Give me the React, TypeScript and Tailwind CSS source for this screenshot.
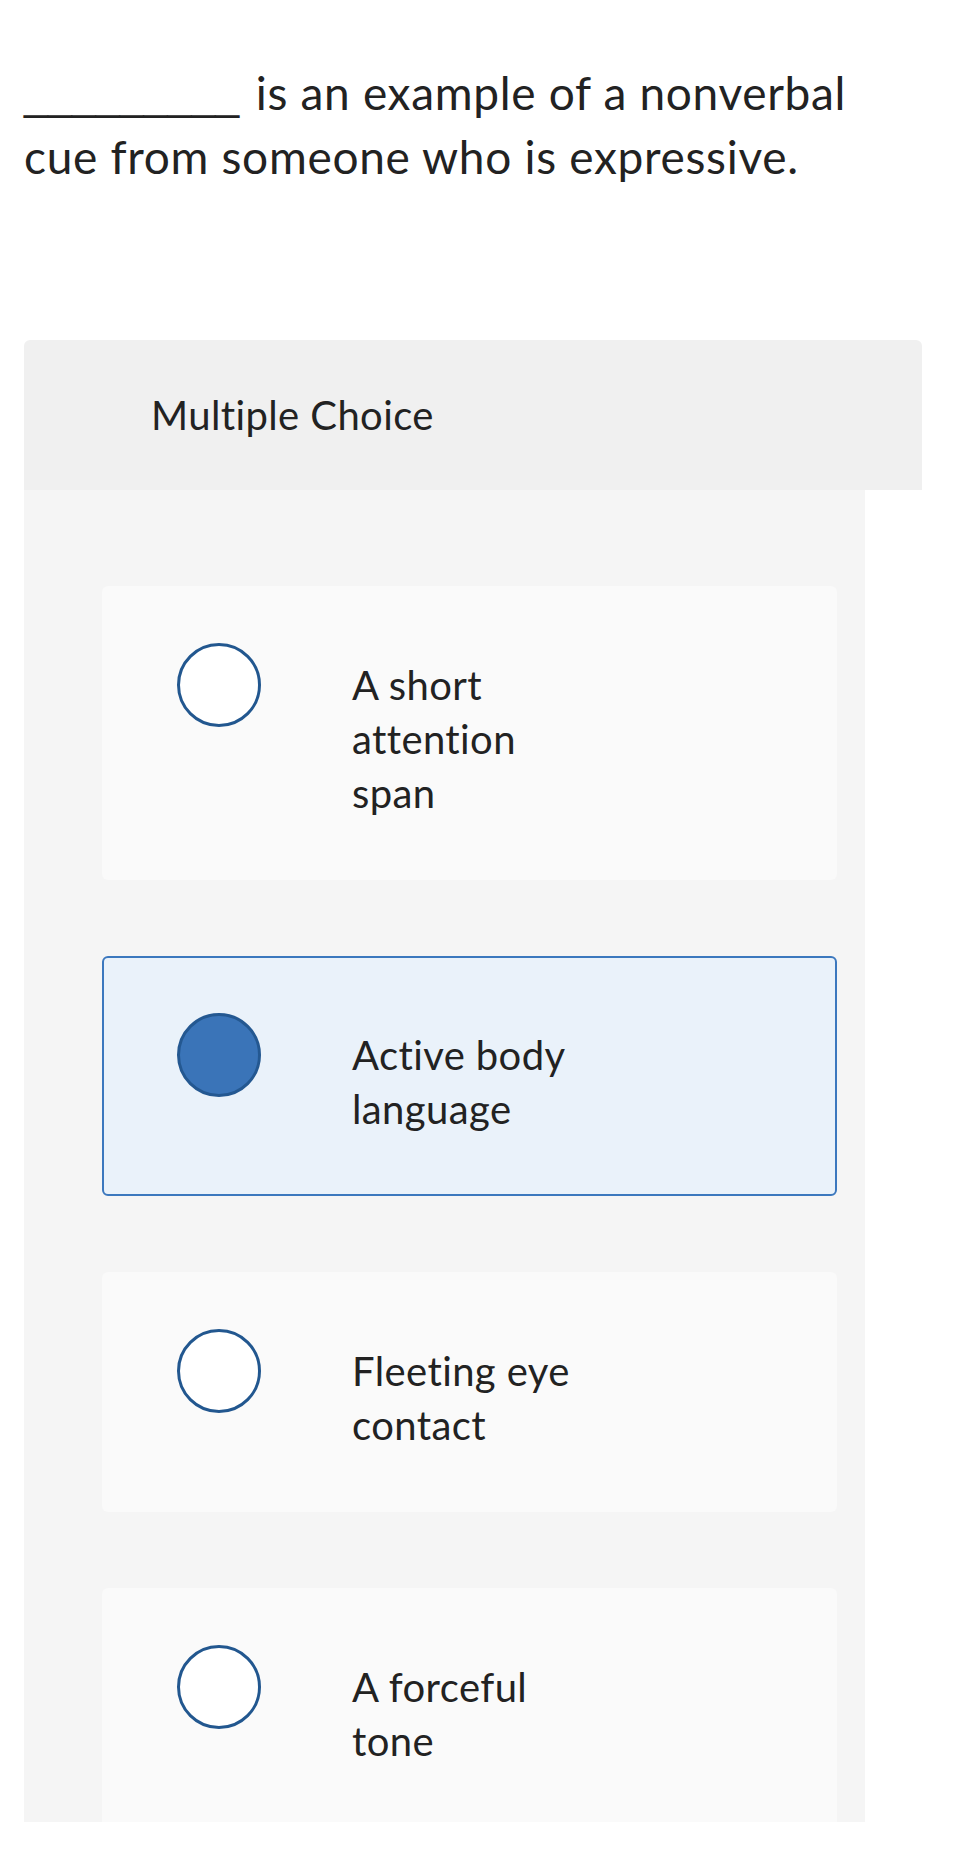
import React from "react";

type Choice = {
  label: string;
  selected?: boolean;
};

const choices: Choice[] = [
  { label: "A short attention span" },
  { label: "Active body language", selected: true },
  { label: "Fleeting eye contact" },
  { label: "A forceful tone" },
];

function Radio({ checked }: { checked?: boolean }) {
  return (
    <span
      className={`block h-[84px] w-[84px] shrink-0 rounded-full border-[3px] ${
        checked ? "border-[#245891] bg-[#3a74b8]" : "border-[#22578f] bg-white"
      }`}
    />
  );
}

function ChoiceCard({ choice }: { choice: Choice }) {
  return (
    <div
      className={`flex items-start rounded-md border-2 pt-[55px] pb-[58px] pl-[73px] ${
        choice.selected
          ? "border-[#3c78be] bg-[#eaf2fa]"
          : "border-transparent bg-[#fafafa]"
      }`}
    >
      <Radio checked={choice.selected} />
      <div className="ml-[91px] mt-[15px] w-[245px] text-[40px] leading-[54px] tracking-[0.01em] text-[#222]">
        {choice.label}
      </div>
    </div>
  );
}

export default function App() {
  return (
    <div className="min-h-[1874px] bg-white font-['Lato',sans-serif] text-[#222]">
      {/* question */}
      <div className="px-6 pt-[62px]">
        <p className="w-[880px] text-[46px] leading-[61px] tracking-[0.015em]">
          <span className="mr-1 font-['Liberation_Sans',sans-serif] text-[43px] tracking-normal">
            _________
          </span>{" "}
          is an example of a nonverbal cue from someone who is expressive.
        </p>
      </div>

      {/* answer area */}
      <div className="mt-[153px] ml-6">
        <div className="flex h-[150px] w-[898px] items-center rounded-t-md bg-[#f0f0f0] pl-[127px] text-[40px] tracking-[0.01em]">
          Multiple Choice
        </div>
        <div className="h-[1332px] w-[841px] overflow-hidden bg-[#f5f5f5] pt-24 pl-[78px] pr-[28px]">
          <div className="flex flex-col gap-[76px]">
            {choices.map((c) => (
              <ChoiceCard key={c.label} choice={c} />
            ))}
          </div>
        </div>
      </div>
    </div>
  );
}
